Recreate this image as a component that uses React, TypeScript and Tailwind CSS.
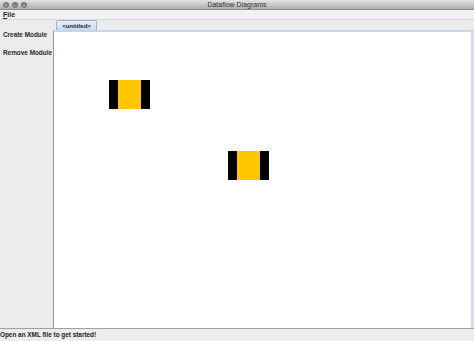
import React from "react";

function Block({ left, top }: { left: number; top: number }) {
  return (
    <div className="absolute flex h-[29px] w-[41px]" style={{ left, top }}>
      <div className="w-[9px] bg-black" />
      <div className="w-[23px] bg-[#ffc700]" />
      <div className="w-[9px] bg-black" />
    </div>
  );
}

function Light({ glyph }: { glyph: string }) {
  return (
    <div className="flex h-[6px] w-[6px] items-center justify-center rounded-full bg-[#7a7a7a] text-[5px] leading-none text-[#d0d0d0]">
      {glyph}
    </div>
  );
}

export default function App() {
  return (
    <div
      className="flex h-[341px] w-[474px] flex-col overflow-hidden bg-[#ececec] text-[#1a1a1a]"
      style={{ fontFamily: '"Liberation Sans", Arial, sans-serif' }}
    >
      {/* title bar */}
      <div className="relative flex h-[10px] items-center justify-center border-b border-[#8c8c8c] bg-gradient-to-b from-[#e4e4e4] to-[#aeaeae]">
        <div className="absolute left-[3px] top-[2px] flex gap-[3px]">
          <Light glyph="×" />
          <Light glyph="−" />
          <Light glyph="+" />
        </div>
        <span className="text-[7px] leading-none text-[#333]">Dataflow Diagrams</span>
      </div>
      {/* menu bar */}
      <div className="flex h-[10px] items-center border-b border-[#d8d8de] bg-[#f2f1f3] pl-[3px]">
        <span className="text-[7px] leading-none font-bold text-[#222]">
          <span className="underline">F</span>ile
        </span>
      </div>
      {/* main */}
      <div className="flex min-h-0 flex-1">
        <div className="flex w-[53px] flex-col gap-[10px] pl-[3px] pt-[11px]">
          <span className="text-[6.4px] leading-[8px] font-bold text-[#2a2a2a]">Create Module</span>
          <span className="text-[6.4px] leading-[8px] font-bold text-[#2a2a2a]">Remove Module</span>
        </div>
        <div className="flex flex-1 flex-col">
          <div className="flex h-[10px] items-end pl-[3px]">
            <div className="flex h-[10px] w-[41px] items-center justify-center rounded-t-[2px] border border-b-0 border-[#9fb4cc] bg-gradient-to-b from-[#e6eef8] to-[#c9dbef]">
              <span className="text-[6px] leading-none font-bold text-[#2a2a2a]">&lt;untitled&gt;</span>
            </div>
          </div>
          <div className="relative flex-1 border-t-2 border-r-[3px] border-l border-t-[#c3d6ec] border-r-[#cfdff0] border-l-[#9a9a9a] bg-white">
            <Block left={55} top={48} />
            <Block left={174} top={119} />
          </div>
        </div>
      </div>
      {/* status bar */}
      <div className="flex h-[13px] items-center border-t border-[#9aa2aa] bg-[#ececec]">
        <span className="text-[6.4px] leading-none font-bold text-[#222]">Open an XML file to get started!</span>
      </div>
    </div>
  );
}
